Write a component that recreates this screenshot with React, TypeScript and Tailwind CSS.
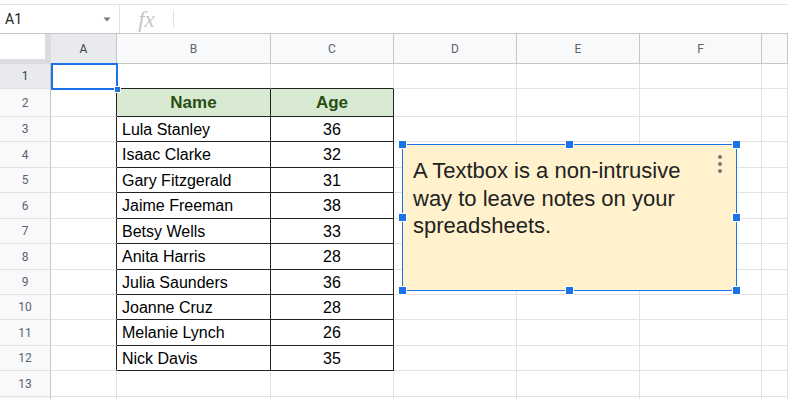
import { ChevronDown } from 'lucide-react'

// Column and row geometry of the visible sheet
const COLS = [
  { key: 'A', w: 'w-[66px]' },
  { key: 'B', w: 'w-[154px]' },
  { key: 'C', w: 'w-[123px]' },
  { key: 'D', w: 'w-[123px]' },
  { key: 'E', w: 'w-[123px]' },
  { key: 'F', w: 'w-[122px]' },
  { key: '', w: 'flex-1' },
]

const ROW_H = [
  'h-[25px]', 'h-[28px]', 'h-[25px]', 'h-[26px]', 'h-[25px]', 'h-[26px]', 'h-[25px]',
  'h-[26px]', 'h-[25px]', 'h-[25px]', 'h-[26px]', 'h-[25px]', 'h-[26px]', 'h-[26px]',
]

const PEOPLE: [string, number][] = [
  ['Lula Stanley', 36],
  ['Isaac Clarke', 32],
  ['Gary Fitzgerald', 31],
  ['Jaime Freeman', 38],
  ['Betsy Wells', 33],
  ['Anita Harris', 28],
  ['Julia Saunders', 36],
  ['Joanne Cruz', 28],
  ['Melanie Lynch', 26],
  ['Nick Davis', 35],
]

function cellBorder(row: number, col: number) {
  // row is 1-based sheet row, col 0 = A
  const inTable = row >= 2 && row <= 12 && (col === 1 || col === 2)
  const leftOfTable = row >= 2 && row <= 12 && col === 0
  const aboveTable = row === 1 && (col === 1 || col === 2)
  if (inTable) return 'border-r border-b border-r-[#222] border-b-[#222]'
  if (leftOfTable) return 'border-r border-b border-r-[#222] border-b-[#e2e2e2]'
  if (aboveTable) return 'border-r border-b border-r-[#e2e2e2] border-b-[#222]'
  return 'border-r border-b border-[#e2e2e2]'
}

function Cell({ row, col }: { row: number; col: number }) {
  const w = COLS[col].w
  const base = `${w} shrink-0 flex items-center overflow-hidden ${cellBorder(row, col)}`
  if (row === 2 && col === 1)
    return <div className={`${base} justify-center bg-[#d9ead3] font-bold text-[17px] text-[#274e13]`}>Name</div>
  if (row === 2 && col === 2)
    return <div className={`${base} justify-center bg-[#d9ead3] font-bold text-[17px] text-[#274e13]`}>Age</div>
  if (row >= 3 && row <= 12 && col === 1)
    return <div className={`${base} pl-[5px] pt-px text-[16px] text-black`}>{PEOPLE[row - 3][0]}</div>
  if (row >= 3 && row <= 12 && col === 2)
    return <div className={`${base} justify-center pt-px text-[16px] text-black`}>{PEOPLE[row - 3][1]}</div>
  return <div className={base} />
}

function FormulaBar() {
  return (
    <div className="h-[34px] flex flex-col">
      <div className="h-[5px] border-b border-[#e3e3e3]" />
      <div className="flex-1 flex items-center border-b border-[#c7c7c7]">
        <div className="w-[120px] h-full flex items-center justify-between pl-[5px] pr-[8px] border-r border-[#e3e3e3]">
          <span className="text-[14px] text-[#222] font-['Roboto',sans-serif]">A1</span>
          <svg width="8" height="5" viewBox="0 0 8 5"><path d="M0.5 0.5h7L4 4.5z" fill="#777" /></svg>
        </div>
        <div className="w-[53px] h-full flex items-center justify-center">
          <span className="italic text-[23px] text-[#c8c8c8] font-['Liberation_Serif',serif] leading-none">fx</span>
        </div>
        <div className="w-px h-[18px] bg-[#e3e3e3]" />
      </div>
    </div>
  )
}

function ColumnHeaders() {
  return (
    <div className="h-[30px] flex">
      <div className="w-[51px] shrink-0 flex flex-col bg-white">
        <div className="flex-1 flex">
          <div className="flex-1" />
          <div className="w-[6px] bg-[#dadcdf]" />
        </div>
        <div className="h-[5px] bg-[#dadcdf]" />
      </div>
      {COLS.map((c, i) => (
        <div
          key={i}
          className={`${c.w} shrink-0 flex items-center justify-center border-r border-b border-[#c7c7c7] text-[12px] font-['Roboto',sans-serif] ${
            i === 0 ? 'bg-[#e8eaed] text-[#3c4043]' : 'bg-[#f8f9fa] text-[#5f6368]'
          }`}
        >
          {c.key}
        </div>
      ))}
    </div>
  )
}

function TextBox() {
  const handle = 'absolute w-[9px] h-[9px] bg-[#1a73e8] border border-white'
  return (
    <div className="absolute left-[402px] top-[144px] w-[335px] h-[147px] bg-[#fff2cc] border border-[#1a73e8]">
      <p className="pl-[10px] pr-[24px] pt-[12px] text-[22px] leading-[27.6px] text-[#222] font-['Liberation_Sans',Arial,sans-serif]">
        A Textbox is a non-intrusive way to leave notes on your spreadsheets.
      </p>
      <div className="absolute right-[14px] top-[10px] flex flex-col gap-[3px]">
        <div className="w-[4px] h-[4px] rounded-full bg-[#777]" />
        <div className="w-[4px] h-[4px] rounded-full bg-[#777]" />
        <div className="w-[4px] h-[4px] rounded-full bg-[#777]" />
      </div>
      <div className={`${handle} -left-[5px] -top-[5px]`} />
      <div className={`${handle} left-[162px] -top-[5px]`} />
      <div className={`${handle} -right-[5px] -top-[5px]`} />
      <div className={`${handle} -left-[5px] top-[68px]`} />
      <div className={`${handle} -right-[5px] top-[68px]`} />
      <div className={`${handle} -left-[5px] -bottom-[5px]`} />
      <div className={`${handle} left-[162px] -bottom-[5px]`} />
      <div className={`${handle} -right-[5px] -bottom-[5px]`} />
    </div>
  )
}

export default function App() {
  return (
    <div className="relative w-[788px] h-[399px] overflow-hidden bg-white font-['Liberation_Sans',Arial,sans-serif]">
      <FormulaBar />
      <ColumnHeaders />
      {ROW_H.map((h, r) => {
        const row = r + 1
        return (
          <div key={row} className={`${h} flex`}>
            <div
              className={`w-[51px] shrink-0 flex items-center justify-center border-r border-b border-r-[#c7c7c7] border-b-[#e2e2e2] text-[12px] font-['Roboto',sans-serif] ${
                row === 1 ? 'bg-[#e8eaed] text-[#3c4043]' : 'bg-[#f8f9fa] text-[#5f6368]'
              }`}
            >
              {row <= 13 ? row : ''}
            </div>
            {COLS.map((_, c) => (
              <Cell key={c} row={row} col={c} />
            ))}
          </div>
        )
      })}

      {/* active cell A1 */}
      <div className="absolute left-[51px] top-[63px] w-[67px] h-[27px] border-2 border-[#1a73e8]" />
      <div className="absolute left-[114px] top-[86px] w-[7px] h-[7px] bg-[#1a73e8] border border-white" />

      <TextBox />
    </div>
  )
}
